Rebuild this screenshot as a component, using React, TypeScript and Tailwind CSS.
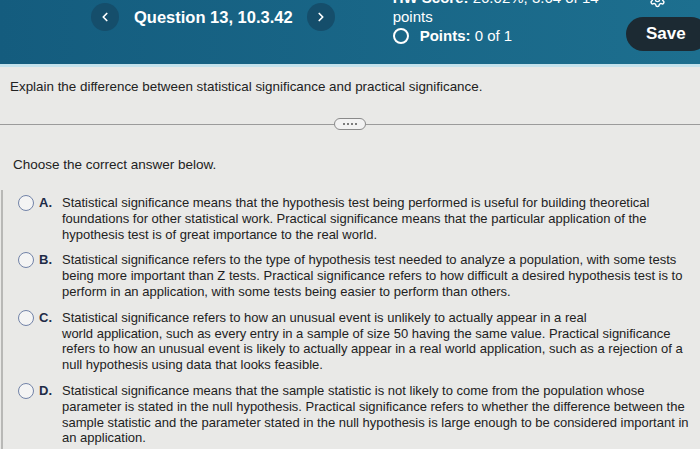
import { ChevronLeft, ChevronRight, Settings } from "lucide-react";

const options = [
  {
    key: "A",
    lines: [
      "Statistical significance means that the hypothesis test being performed is useful for building theoretical",
      "foundations for other statistical work. Practical significance means that the particular application of the",
      "hypothesis test is of great importance to the real world.",
    ],
  },
  {
    key: "B",
    lines: [
      "Statistical significance refers to the type of hypothesis test needed to analyze a population, with some tests",
      "being more important than Z tests. Practical significance refers to how difficult a desired hypothesis test is to",
      "perform in an application, with some tests being easier to perform than others.",
    ],
  },
  {
    key: "C",
    lines: [
      "Statistical significance refers to how an unusual event is unlikely to actually appear in a real",
      "world application, such as every entry in a sample of size 50 having the same value. Practical significance",
      "refers to how an unusual event is likely to actually appear in a real world application, such as a rejection of a",
      "null hypothesis using data that looks feasible.",
    ],
  },
  {
    key: "D",
    lines: [
      "Statistical significance means that the sample statistic is not likely to come from the population whose",
      "parameter is stated in the null hypothesis. Practical significance refers to whether the difference between the",
      "sample statistic and the parameter stated in the null hypothesis is large enough to be considered important in",
      "an application.",
    ],
  },
];

export default function App() {
  return (
    <div className="w-[700px] h-[449px] overflow-hidden bg-[#e9e9e7] font-['Liberation_Sans',Arial,sans-serif] text-[#222]">
      {/* top bar */}
      <div className="h-[67px] bg-gradient-to-r from-[#145c7e] to-[#1d6f8f] border-b-[3px] border-[#c4e2ec] flex items-start overflow-hidden text-white">
        <div className="ml-[91px] mt-[3px] flex items-center">
          <div className="w-7 h-7 rounded-full bg-[#154e6b] flex items-center justify-center">
            <ChevronLeft size={14} strokeWidth={3} />
          </div>
          <div className="ml-[15px] text-[16.5px] font-bold">Question 13, 10.3.42</div>
          <div className="ml-[14px] w-7 h-7 rounded-full bg-[#154e6b] flex items-center justify-center">
            <ChevronRight size={14} strokeWidth={3} />
          </div>
        </div>
        <div className="ml-[58px] mt-[-12px] flex flex-col text-[15px] leading-[19px]">
          <div>
            <span className="font-bold">HW Score:</span> 26.02%, 3.64 of 14
          </div>
          <div>points</div>
          <div className="flex items-center">
            <span className="w-[16px] h-[16px] rounded-full border-2 border-white mr-[11px]" />
            <span className="font-bold">Points:</span>&nbsp;0 of 1
          </div>
        </div>
        <div className="ml-auto flex flex-col items-center">
          <Settings size={17} strokeWidth={2} className="mt-[-9px] mr-[12px]" />
          <div className="mt-[9px] h-[34px] w-[82px] mr-[-8px] rounded-full bg-[#1c2a33] flex items-center pl-[20px] text-[17px] font-bold">
            Save
          </div>
        </div>
      </div>

      <p className="mt-[12px] ml-[10px] text-[13.4px] leading-[16px]">
        Explain the difference between statistical significance and practical significance.
      </p>

      <div className="mt-[23px] flex items-center">
        <div className="flex-1 h-px bg-[#9b9b9b]" />
        <div className="w-[32px] h-[12px] rounded-full border border-[#8a8a8a] bg-[#f2f2f2] flex items-center justify-center gap-[2px]">
          <span className="w-[2px] h-[2px] rounded-full bg-[#555]" />
          <span className="w-[2px] h-[2px] rounded-full bg-[#555]" />
          <span className="w-[2px] h-[2px] rounded-full bg-[#555]" />
          <span className="w-[2px] h-[2px] rounded-full bg-[#555]" />
        </div>
        <div className="flex-1 h-px bg-[#9b9b9b]" />
      </div>

      <p className="mt-[27px] ml-[13px] text-[13.5px] leading-[16px]">Choose the correct answer below.</p>

      <div className="mt-[17px] border-l-2 border-[#b8b8b6] ml-[1px] pt-[5px] pl-[15px] h-full">
        <div className="flex flex-col gap-[10px]">
          {options.map((o) => (
            <div key={o.key} className="flex items-start text-[13px] leading-[15.8px]">
              <span className="w-[16px] h-[16px] rounded-full border-[1.5px] border-[#7283a8] bg-[#f4f4f4] shrink-0" />
              <span className="ml-[5px] w-[23px] font-bold text-[#1e2b46]">{o.key}.</span>
              <div>
                {o.lines.map((l, i) => (
                  <div key={i} className="whitespace-nowrap">
                    {l}
                  </div>
                ))}
              </div>
            </div>
          ))}
        </div>
      </div>
    </div>
  );
}
